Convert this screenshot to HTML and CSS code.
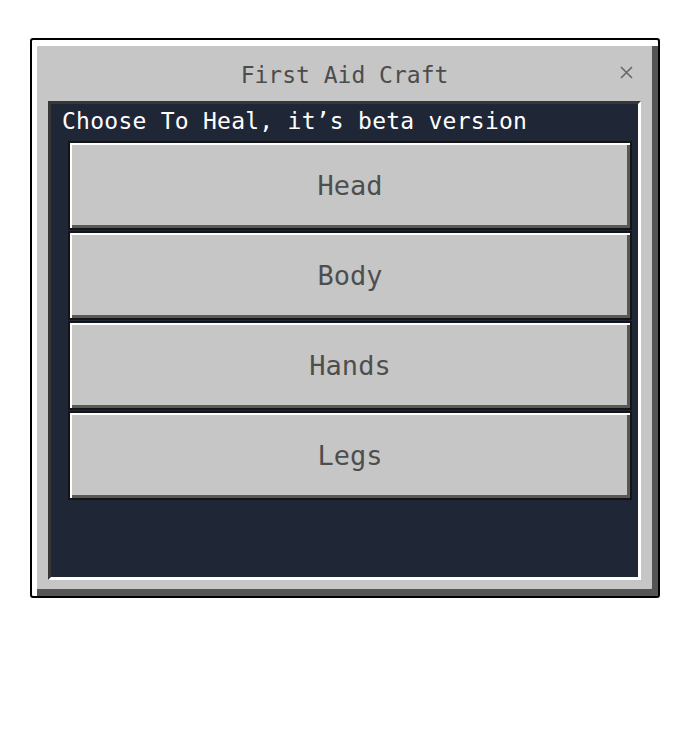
FILE: index.html
```html
<!DOCTYPE html>
<html lang="en">

<head>
    <meta charset="UTF-8">
    <title>First Aid Craft</title>
    <link rel="stylesheet" href="styles.css">
</head>

<body>
    <div class="form-window">
        <div class="form-header">
            <span></span>
            <h1 class="form-title">First Aid Craft</h1>
            <button class="close-btn" type="button" aria-label="Close">
                <svg width="13" height="13" viewBox="0 0 13 13">
                    <path d="M1 1 L12 12 M12 1 L1 12" stroke="#666" stroke-width="1.6" fill="none" />
                </svg>
            </button>
        </div>
        <div class="form-panel">
            <p class="form-body">Choose To Heal, it’s beta version</p>
            <div class="button-list">
                <button class="mc-button" type="button">Head</button>
                <button class="mc-button" type="button">Body</button>
                <button class="mc-button" type="button">Hands</button>
                <button class="mc-button" type="button">Legs</button>
            </div>
        </div>
    </div>
</body>

</html>
```

FILE: styles.css
```css
body {
    font-family: 'DejaVu Sans Mono', 'Liberation Mono', monospace;
    background-color: #fff;
    margin: 0;
    padding: 38px 0 0 30px;
}

.form-window {
    box-sizing: border-box;
    width: 630px;
    height: 560px;
    background-color: #c6c6c6;
    border: 2px solid #000;
    border-radius: 3px;
    box-shadow: inset 5px 6px 0 #fff, inset -6px -7px 0 #555;
    padding: 0 17px 16px 16px;
}

.form-header {
    display: grid;
    grid-template-columns: 1fr auto 1fr;
    align-items: center;
    height: 61px;
    padding-top: 8px;
    box-sizing: border-box;
}

.form-title {
    margin: 0;
    font-size: 23px;
    font-weight: normal;
    color: #4c4c4c;
    text-align: center;
}

.close-btn {
    justify-self: end;
    margin-right: 8px;
    margin-top: -4px;
    padding: 0;
    border: none;
    background: none;
    display: flex;
    cursor: pointer;
}

.form-panel {
    box-sizing: border-box;
    height: 479px;
    background-color: #1f2737;
    border-top: 3px solid #373737;
    border-left: 3px solid #373737;
    border-bottom: 3px solid #fff;
    border-right: 3px solid #fff;
    padding: 4px 6px 0 17px;
}

.form-body {
    margin: 0 0 6px -6px;
    font-size: 23px;
    line-height: 27px;
    letter-spacing: 0.25px;
    color: #fff;
}

.button-list {
    display: flex;
    flex-direction: column;
    gap: 1px;
}

.mc-button {
    height: 89px;
    font-family: inherit;
    font-size: 27px;
    color: #4e4e4e;
    background-color: #c6c6c6;
    border: 2px solid #141414;
    box-shadow: inset 2px 2px 0 #fff, inset -3px -3px 0 #585858;
    cursor: pointer;
}
```
